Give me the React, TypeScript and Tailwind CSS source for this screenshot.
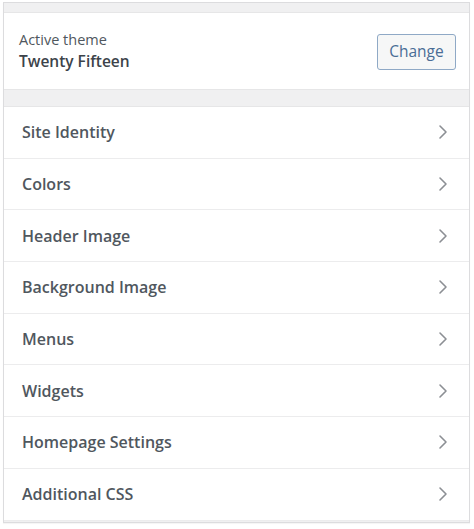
import { ChevronRight } from "lucide-react";

const sections = [
  "Site Identity",
  "Colors",
  "Header Image",
  "Background Image",
  "Menus",
  "Widgets",
  "Homepage Settings",
  "Additional CSS",
];

export default function App() {
  return (
    <div
      className="min-h-[529px] bg-white pl-[3px] pt-[2px]"
      style={{ fontFamily: '"Open Sans", "Noto Sans", sans-serif' }}
    >
      <div className="w-[467px] border border-[#dcdcde] bg-[#f0f0f1] shadow-[0_1px_1px_rgba(0,0,0,0.04)]">
        {/* Theme header */}
        <div className="mt-[9px] flex h-[78px] items-center justify-between border-y border-[#e6e6e7] bg-white pl-[15px] pr-[13px]">
          <div className="flex flex-col">
            <span className="text-[14.5px] leading-[20px] text-[#50575e]">Active theme</span>
            <span className="text-[15.5px] font-semibold leading-[22px] text-[#3c434a]">
              Twenty Fifteen
            </span>
          </div>
          <button className="mt-[1px] h-[36px] w-[79px] rounded-[3px] border border-[#8fa9c6] bg-[#f6f7f7] text-[15.5px] text-[#4a6d96]">
            Change
          </button>
        </div>

        {/* Sections */}
        <ul className="mt-[16px] mb-[1px] border-t border-[#e6e6e7]">
          {sections.map((label) => (
            <li
              key={label}
              className="flex h-[51.7px] items-center justify-between border-b border-[#ececed] bg-white pl-[18px] pr-[14px]"
            >
              <span className="text-[16px] font-semibold text-[#50575e]">{label}</span>
              <ChevronRight size={24} strokeWidth={1.6} className="text-[#8c8f94]" />
            </li>
          ))}
        </ul>
      </div>
    </div>
  );
}
